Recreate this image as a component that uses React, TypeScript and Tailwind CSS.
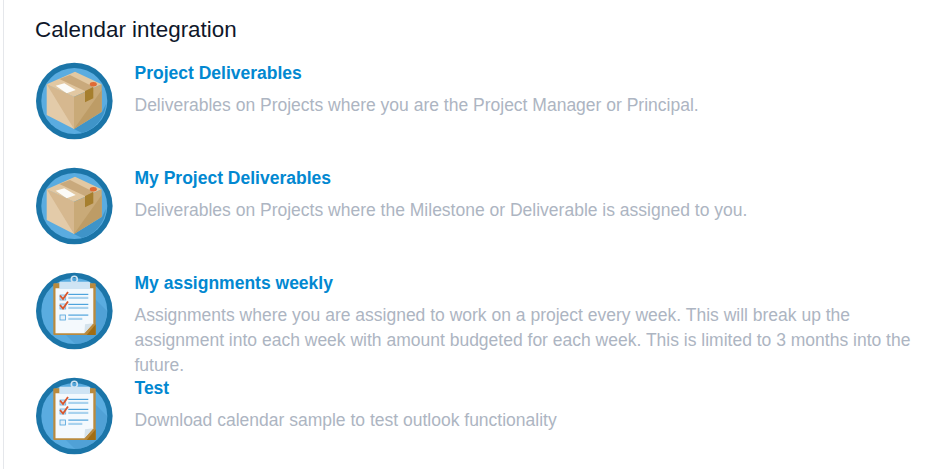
const Box = () => (
  <svg width="78" height="78" viewBox="0 0 78 78" className="shrink-0">
    <circle cx="39.3" cy="39" r="38.3" fill="#1b75a8" />
    <circle cx="39.3" cy="39" r="33" fill="#5aace0" />
    <path d="M39 67 L67 50 L71 42 A33 33 0 0 1 47 71 Z" fill="#3f94c8" />
    <path d="M11.7 22.3 L40 9.7 L66.7 22.3 L39 34.7 Z" fill="#e2c8a2" />
    <path d="M24.3 17 L35 13 L58.3 24.7 L50 29 Z" fill="#c9a97c" />
    <path d="M20.7 23.7 L29.3 21.3 L40.7 28 L31.7 31.3 Z" fill="#fbfbf8" />
    <path d="M11.7 22.3 L39 34.7 L39 67 L11.7 53 Z" fill="#e3cba9" />
    <path d="M11.7 22.3 L39 34.7 L39 67 Z" fill="#d6b88f" />
    <path d="M39 34.7 L66.7 22.3 L66.7 49.7 L39 67 Z" fill="#c9aa78" />
    <path d="M39 67 L66.7 28 L66.7 49.7 Z" fill="#bd9c66" />
    <path d="M50 29 L58.3 24.7 L58.3 36.3 L50 40.3 Z" fill="#a67f2e" />
    <ellipse cx="58.3" cy="22.3" rx="3.5" ry="2.2" fill="#df6a35" />
  </svg>
);

const Clip = () => (
  <svg width="78" height="78" viewBox="0 0 78 78" className="shrink-0">
    <circle cx="39.3" cy="39" r="38.3" fill="#1b75a8" />
    <circle cx="39.3" cy="39" r="33" fill="#5aace0" />
    <path d="M39 6 L72 39 A33 33 0 0 1 40 72 L28 60 Z" fill="#4b9dd2" opacity="0.7" />
    <rect x="18.3" y="11.3" width="42.4" height="51.7" rx="1" fill="#b98a3e" />
    <path d="M20.5 16.3 H58.3 V51.3 L49.3 61.3 H20.5 Z" fill="#f4f9fd" />
    <path d="M49.3 61.3 L58.3 51.3 L50 52.3 Z" fill="#d5e3ec" />
    <path d="M51.7 63 L60.7 52.3 V63 Z" fill="#a06d14" />
    <rect x="24.3" y="9.7" width="30.7" height="7.3" rx="1" fill="#cfe4f4" />
    <circle cx="39.3" cy="7.3" r="3" fill="none" stroke="#cfe3f2" strokeWidth="1.6" />
    <rect x="25" y="23" width="5.7" height="5" fill="#cfe3f3" stroke="#6aaedb" strokeWidth="0.8" />
    <path d="M25 23.5 L28 27 L33 20" fill="none" stroke="#d9562c" strokeWidth="1.8" />
    <rect x="33.3" y="21.8" width="20" height="1.2" fill="#4ea3dc" />
    <rect x="33.3" y="24.8" width="20" height="2.2" fill="#a8d2ee" />
    <rect x="25" y="32" width="5.7" height="5" fill="#cfe3f3" stroke="#6aaedb" strokeWidth="0.8" />
    <path d="M25 33 L28 36.5 L33 29.5" fill="none" stroke="#d9562c" strokeWidth="1.8" />
    <rect x="33.3" y="31.8" width="20" height="1.2" fill="#4ea3dc" />
    <rect x="33.3" y="34.8" width="20" height="2.2" fill="#a8d2ee" />
    <rect x="25" y="43" width="5.4" height="5" fill="#e6f1f9" stroke="#4ea3dc" strokeWidth="0.8" />
    <rect x="33.3" y="42.5" width="20" height="1.2" fill="#4ea3dc" />
    <rect x="33.3" y="45.8" width="14" height="2.2" fill="#a8d2ee" />
  </svg>
);

const rows = [
  { icon: <Box />, title: "Project Deliverables", desc: "Deliverables on Projects where you are the Project Manager or Principal." },
  { icon: <Box />, title: "My Project Deliverables", desc: "Deliverables on Projects where the Milestone or Deliverable is assigned to you." },
  { icon: <Clip />, title: "My assignments weekly", desc: "Assignments where you are assigned to work on a project every week. This will break up the assignment into each week with amount budgeted for each week. This is limited to 3 months into the future." },
  { icon: <Clip />, title: "Test", desc: "Download calendar sample to test outlook functionality" },
];

export default function App() {
  return (
    <div className="h-[469px] w-[928px] overflow-hidden bg-white font-['Liberation_Sans',Arial,sans-serif]">
      <div className="h-full border-l border-[#e5e7eb] ml-[3px] pl-[31px] pr-[14px] pt-[15px]">
        <h2 className="text-[22.4px] leading-[30px] text-[#0f172a] mb-[17px]">Calendar integration</h2>
        <div className="flex flex-col">
          {rows.map((r) => (
            <div key={r.title} className="flex h-[105px] gap-[21.5px]">
              {r.icon}
              <div className="-mt-[1px]">
                <div className="text-[17.5px] leading-[24px] font-bold text-[#0288d1]">{r.title}</div>
                <p className="mt-[8px] text-[17.5px] leading-[25px] text-[#adb5c2]">{r.desc}</p>
              </div>
            </div>
          ))}
        </div>
      </div>
    </div>
  );
}
